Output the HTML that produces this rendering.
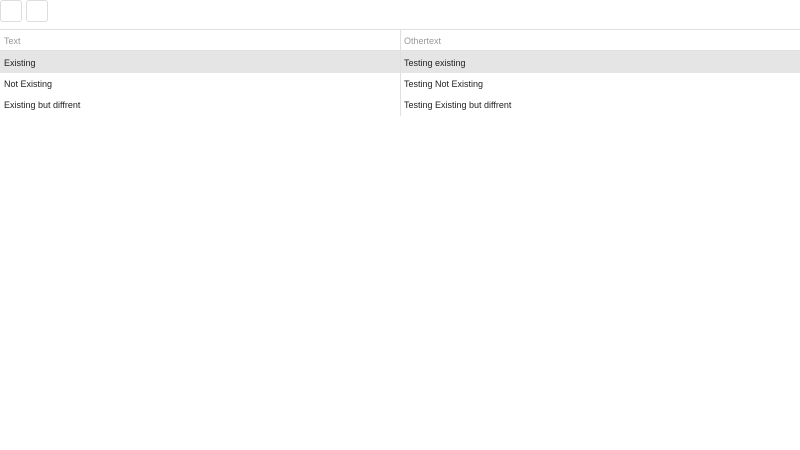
<!DOCTYPE html>
<html><head><style>
body{margin:0;width:800px;height:450px;background:#fff;font-family:"Liberation Sans",sans-serif;font-size:9px;color:#222;position:relative;overflow:hidden}
.b{position:absolute;top:0;width:20px;height:20px;border:1px solid #ddd;border-radius:3px;background:#fff}
.hl{position:absolute;left:0;width:800px;height:1px;background:#e0e0e0}
.c{position:absolute;line-height:22px}
</style></head><body>
<div class="b" style="left:0"></div>
<div class="b" style="left:26px"></div>
<div class="hl" style="top:29px"></div>
<div class="c" style="top:30px;left:4px;color:#999">Text</div>
<div class="c" style="top:30px;left:404px;color:#999">Othertext</div>
<div class="hl" style="top:50px"></div>
<div style="position:absolute;top:51px;left:0;width:800px;height:22px;background:#e5e5e5"></div>
<div class="c" style="top:52px;left:4px">Existing</div>
<div class="c" style="top:52px;left:404px">Testing existing</div>
<div class="c" style="top:73px;left:4px">Not Existing</div>
<div class="c" style="top:73px;left:404px">Testing Not Existing</div>
<div class="c" style="top:94px;left:4px">Existing but diffrent</div>
<div class="c" style="top:94px;left:404px">Testing Existing but diffrent</div>
<div style="position:absolute;left:400px;top:29px;width:1px;height:87px;background:#e0e0e0"></div>
</body></html>
